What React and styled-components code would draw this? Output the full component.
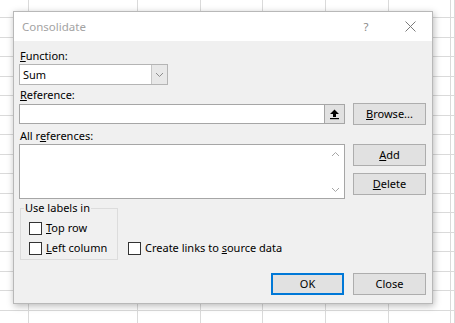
import React from "react";
import styled, { createGlobalStyle } from "styled-components";

const GlobalStyle = createGlobalStyle`
  html, body {
    margin: 0;
    padding: 0;
    background: #fff;
  }
  body {
    font-family: "Noto Sans", "Open Sans", sans-serif;
    font-size: 11px;
    color: #000;
  }
`;

const Sheet = styled.div`
  position: relative;
  width: 455px;
  height: 323px;
  overflow: hidden;
`;

const Grid = styled.div`
  display: grid;
  grid-template-columns: 29px 109px 63px 62px 63px 63px 62px 1fr;
  grid-auto-rows: 19.5px;
  margin-top: -1.5px;
`;

const Cell = styled.div`
  box-sizing: border-box;
  border-right: 1px solid #dadada;
  border-bottom: 1px solid #dadada;
`;

const Dialog = styled.div`
  position: absolute;
  left: 13px;
  top: 11px;
  width: 420px;
  height: 293px;
  box-sizing: border-box;
  border: 1px solid #b8b8b8;
  background: #f0f0f0;
  box-shadow: 1px 2px 7px rgba(0, 0, 0, 0.28);
  display: flex;
  flex-direction: column;
`;

const TitleBar = styled.div`
  height: 29px;
  background: #fff;
  display: flex;
  align-items: center;
  padding-left: 8px;
`;

const Title = styled.div`
  flex: 1;
  color: #a3a3a3;
  font-size: 11.5px;
`;

const TitleButton = styled.div`
  width: 44px;
  height: 29px;
  display: flex;
  align-items: center;
  justify-content: center;
  color: #8a8a8a;
  font-size: 11.5px;
`;

const Body = styled.div`
  flex: 1;
  padding: 7px 6px 0 5px;
  display: flex;
  flex-direction: column;
`;

const FieldLabel = styled.div`
  line-height: 16px;
  padding-left: 1px;
  margin-top: ${({ $top }) => $top || 0}px;
`;

const Key = styled.u`
  text-decoration: underline;
  text-underline-offset: 1px;
`;

const Combo = styled.div`
  width: 149px;
  height: 21px;
  box-sizing: border-box;
  border: 1px solid #b4b4b4;
  background: #fff;
  display: flex;
  align-items: center;
`;

const ComboText = styled.div`
  flex: 1;
  padding-left: 3px;
`;

const ComboArrow = styled.div`
  width: 16px;
  height: 19px;
  box-sizing: border-box;
  border-left: 1px solid #c6c6c6;
  background: #e8e8e8;
  display: flex;
  align-items: center;
  justify-content: center;
`;

const Row = styled.div`
  display: flex;
  gap: 8px;
  align-items: ${({ $align }) => $align || "center"};
  margin-top: ${({ $top }) => $top || 0}px;
`;

const RefInput = styled.div`
  width: 326px;
  height: 20px;
  box-sizing: border-box;
  border: 1px solid #a6a6a6;
  background: #fff;
  display: flex;
  justify-content: flex-end;
`;

const CollapseButton = styled.div`
  width: 21px;
  height: 20px;
  margin: -1px -1px 0 0;
  box-sizing: border-box;
  border: 1px solid #a6a6a6;
  background: #e1e1e1;
  display: flex;
  align-items: center;
  justify-content: center;
`;

const Button = styled.div`
  width: 73px;
  height: 22px;
  box-sizing: border-box;
  border: 1px solid ${({ $default }) => ($default ? "#0078d7" : "#adadad")};
  box-shadow: ${({ $default }) => ($default ? "inset 0 0 0 1px #0078d7" : "none")};
  background: #e1e1e1;
  display: flex;
  align-items: center;
  justify-content: center;
  line-height: 16px;
`;

const ListBox = styled.div`
  width: 326px;
  height: 55px;
  box-sizing: border-box;
  border: 1px solid #a6a6a6;
  background: #fff;
  display: flex;
  justify-content: flex-end;
`;

const ScrollBar = styled.div`
  width: 17px;
  display: flex;
  flex-direction: column;
  justify-content: space-between;
  align-items: center;
  padding: 5px 0 4px;
`;

const ButtonColumn = styled.div`
  display: flex;
  flex-direction: column;
  gap: 7px;
`;

const OptionsRow = styled.div`
  display: flex;
  align-items: flex-end;
  margin-top: 1px;
`;

const GroupBox = styled.fieldset`
  width: 98px;
  box-sizing: border-box;
  margin: 0 0 0 1px;
  padding: 0;
  border: 1px solid #dcdcdc;
`;

const GroupLegend = styled.legend`
  margin-left: 3px;
  padding: 0 1px;
  line-height: 16px;
`;

const CheckList = styled.div`
  display: flex;
  flex-direction: column;
  gap: 4px;
  padding: 4px 0 3px 8px;
`;

const CheckRow = styled.div`
  display: flex;
  align-items: center;
  line-height: 16px;
  margin: ${({ $outer }) => ($outer ? "0 0 4px 10px" : "0")};
`;

const Box = styled.div`
  width: 13px;
  height: 13px;
  box-sizing: border-box;
  border: 1px solid #333;
  background: #fff;
  margin-right: 4px;
`;

const Footer = styled.div`
  display: flex;
  justify-content: flex-end;
  gap: 9px;
  margin-top: 13px;
`;

const Chevron = ({ up, size = 9, color = "#a6a6a6" }) => (
  <svg width={size} height={size} viewBox="0 0 9 9">
    <polyline
      points={up ? "1,6 4.5,2.5 8,6" : "1,3 4.5,6.5 8,3"}
      fill="none"
      stroke={color}
      strokeWidth="1"
    />
  </svg>
);

const CloseIcon = () => (
  <svg width="11" height="11" viewBox="0 0 11 11">
    <path d="M0.5 0.5 L10.5 10.5 M10.5 0.5 L0.5 10.5" stroke="#7a7a7a" strokeWidth="1" />
  </svg>
);

const CollapseIcon = () => (
  <svg width="11" height="11" viewBox="0 0 11 11">
    <path d="M5.5 0.5 L10 5 L7 5 L7 8 L4 8 L4 5 L1 5 Z" fill="#000" />
    <rect x="1" y="9" width="9" height="1.2" fill="#000" />
  </svg>
);

const Check = ({ children, outer }) => (
  <CheckRow $outer={outer}>
    <Box />
    <span>{children}</span>
  </CheckRow>
);

export default function App() {
  const cells = Array.from({ length: 17 * 8 });
  return (
    <>
      <GlobalStyle />
      <Sheet>
        <Grid>
          {cells.map((_, i) => (
            <Cell key={i} />
          ))}
        </Grid>
        <Dialog>
          <TitleBar>
            <Title>Consolidate</Title>
            <TitleButton>?</TitleButton>
            <TitleButton>
              <CloseIcon />
            </TitleButton>
          </TitleBar>
          <Body>
            <FieldLabel>
              <Key>F</Key>unction:
            </FieldLabel>
            <Combo>
              <ComboText>Sum</ComboText>
              <ComboArrow>
                <Chevron color="#8c8c8c" />
              </ComboArrow>
            </Combo>
            <FieldLabel $top={2}>
              <Key>R</Key>eference:
            </FieldLabel>
            <Row>
              <RefInput>
                <CollapseButton>
                  <CollapseIcon />
                </CollapseButton>
              </RefInput>
              <Button>
                <Key>B</Key>rowse...
              </Button>
            </Row>
            <FieldLabel $top={3}>
              All r<Key>e</Key>ferences:
            </FieldLabel>
            <Row $align="flex-start">
              <ListBox>
                <ScrollBar>
                  <Chevron up />
                  <Chevron />
                </ScrollBar>
              </ListBox>
              <ButtonColumn>
                <Button>
                  <Key>A</Key>dd
                </Button>
                <Button>
                  <Key>D</Key>elete
                </Button>
              </ButtonColumn>
            </Row>
            <OptionsRow>
              <GroupBox>
                <GroupLegend>Use labels in</GroupLegend>
                <CheckList>
                  <Check>
                    <Key>T</Key>op row
                  </Check>
                  <Check>
                    <Key>L</Key>eft column
                  </Check>
                </CheckList>
              </GroupBox>
              <Check outer>
                Create links to <Key>s</Key>ource data
              </Check>
            </OptionsRow>
            <Footer>
              <Button $default>OK</Button>
              <Button>Close</Button>
            </Footer>
          </Body>
        </Dialog>
      </Sheet>
    </>
  );
}
